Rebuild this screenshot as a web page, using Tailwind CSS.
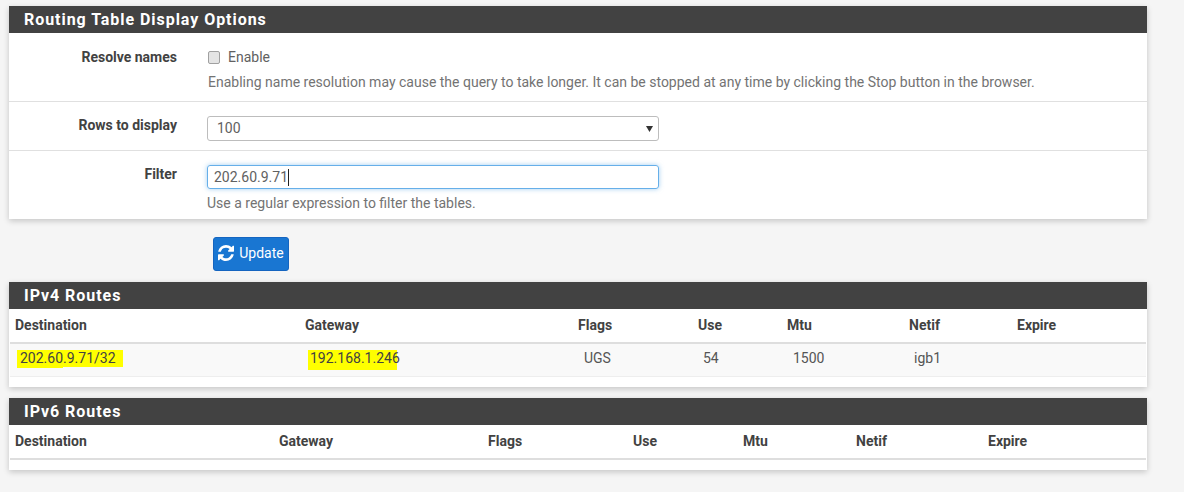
<!DOCTYPE html>
<html lang="en">
  <head>
    <meta charset="UTF-8" />
    <title>Diagnostics: Routes</title>
    <script src="https://cdn.jsdelivr.net/npm/@tailwindcss/browser@4"></script>
  </head>
  <body class="bg-[#f5f5f5] text-[#424242] text-[14px] font-['Roboto',sans-serif] h-[492px] overflow-hidden">
    <div class="w-[1138px] ml-[9px] pt-[6px]">
      <!-- Options panel -->
      <section class="bg-white shadow-[0_2px_6px_rgba(0,0,0,0.2)]">
        <h2 class="h-[27px] bg-[#424242] text-white text-[16px] leading-[27px] font-bold tracking-[0.95px] pl-[15px]">Routing Table Display Options</h2>
        <div class="h-[69px] border-b border-[#e0e0e0] flex">
          <div class="w-[168px] text-right font-bold pt-[14px] leading-[20px]">Resolve names</div>
          <div class="ml-[30px] pt-[14px]">
            <label class="flex items-center h-[20px] text-[#616161]">
              <input type="checkbox" class="appearance-none w-[12px] h-[13px] bg-[#e4e4e4] border border-[#a0a0a0] rounded-[2px] ml-[1px] mr-[7px]" />
              <span class="ml-[1px]">Enable</span>
            </label>
            <p class="mt-[5px] ml-px text-[14px] leading-[20px] text-[#737373]">Enabling name resolution may cause the query to take longer. It can be stopped at any time by clicking the Stop button in the browser.</p>
          </div>
        </div>
        <div class="h-[49px] border-b border-[#e0e0e0] flex">
          <div class="w-[168px] text-right font-bold pt-[13px] leading-[20px]">Rows to display</div>
          <div class="ml-[30px] pt-[14px] relative">
            <select class="appearance-none w-[452px] h-[25px] border border-[#bdbdbd] rounded-[3px] pl-[9px] text-[14px] text-[#616161] bg-white">
              <option>100</option>
            </select>
            <svg class="absolute left-[439px] top-[24px]" width="7" height="6" viewBox="0 0 7 6"><path d="M0 0h7L3.5 6z" fill="#333" /></svg>
          </div>
        </div>
        <div class="h-[68px] flex">
          <div class="w-[168px] text-right font-bold pt-[13px] leading-[20px]">Filter</div>
          <div class="ml-[30px] pt-[14px]">
            <div class="relative">
              <input type="text" value="202.60.9.71" class="block w-[452px] h-[24px] border border-[#66afe9] rounded-[3px] pl-[6px] text-[14px] text-[#616161] shadow-[0_0_5px_rgba(102,175,233,0.6)] outline-none" />
              <span class="absolute left-[81px] top-[4px] w-px h-[17px] bg-[#222]"></span>
            </div>
            <p class="mt-[4px] text-[14px] leading-[20px] text-[#737373]">Use a regular expression to filter the tables.</p>
          </div>
        </div>
      </section>

      <button class="mt-[18px] ml-[204px] w-[76px] h-[34px] pb-[2px] bg-[#1976d2] rounded-[3px] border border-[#1565c0] text-white flex items-center justify-center gap-[5px]">
        <svg width="16" height="16" viewBox="0 0 1536 1536" fill="currentColor"><path d="M1511 928q0 5-1 7-64 268-268 434.5t-478 166.5q-146 0-282.5-55t-243.5-157l-129 129q-19 19-45 19t-45-19-19-45v-448q0-26 19-45t45-19h448q26 0 45 19t19 45-19 45l-137 137q71 66 161 102t187 36q134 0 250-65t186-179q11-17 53-117 8-23 30-23h192q13 0 22.5 9.5t9.5 22.5zm25-800v448q0 26-19 45t-45 19h-448q-26 0-45-19t-19-45 19-45l138-138q-148-137-349-137-134 0-250 65t-186 179q-11 17-53 117-8 23-30 23h-199q-13 0-22.5-9.5t-9.5-22.5v-7q65-268 270-434.5t480-166.5q146 0 284 55.5t245 156.5l130-129q19-19 45-19t45 19 19 45z" /></svg>
        Update
      </button>

      <!-- IPv4 -->
      <section class="mt-[11px] h-[105px] bg-white shadow-[0_2px_6px_rgba(0,0,0,0.2)]">
        <h2 class="h-[27px] bg-[#424242] text-white text-[16px] leading-[27px] font-bold tracking-[0.95px] pl-[15px]">IPv4 Routes</h2>
        <table class="table-fixed w-[1136px] ml-px border-collapse">
          <colgroup>
            <col class="w-[290px]" /><col class="w-[273px]" /><col class="w-[120px]" /><col class="w-[89px]" /><col class="w-[122px]" /><col class="w-[108px]" /><col />
          </colgroup>
          <thead>
            <tr class="h-[34px] border-b-[2px] border-[#dedede] text-left">
              <th class="pl-[5px] pb-[1px]">Destination</th><th class="pl-[5px] pb-[1px]">Gateway</th><th class="pl-[5px] pb-[1px]">Flags</th><th class="pl-[5px] pb-[1px]">Use</th><th class="pl-[5px] pb-[1px]">Mtu</th><th class="pl-[5px] pb-[1px]">Netif</th><th class="pl-[5px] pb-[1px]">Expire</th>
            </tr>
          </thead>
          <tbody class="text-[#555555]">
            <tr class="h-[33px] bg-[#f9f9f9] border-b border-[#eeeeee]">
              <td class="pl-[10px] pb-[3px] relative text-[#424242]">
                <span class="absolute left-[7px] top-[6px] w-[106px] h-[17px] bg-[#ffff00]"></span>
                <span class="absolute left-[7px] top-[21px] w-[46px] h-[3px] bg-[#ffff00]"></span>
                <span class="relative">202.60.9.71/32</span>
              </td>
              <td class="pl-[5px] pb-[3px] relative text-[#424242]">
                <span class="absolute left-[8px] top-[6px] w-[89px] h-[20px] bg-[#ffff00]"></span>
                <span class="relative ml-[5px]">192.168.1.246</span>
              </td>
              <td class="pl-[11px] pb-[3px]">UGS</td><td class="pl-[10px] pb-[3px]">54</td><td class="pl-[11px] pb-[3px]">1500</td><td class="pl-[10px] pb-[3px]">igb1</td><td></td>
            </tr>
          </tbody>
        </table>
      </section>

      <!-- IPv6 -->
      <section class="mt-[11px] h-[72px] bg-white shadow-[0_2px_6px_rgba(0,0,0,0.2)]">
        <h2 class="h-[27px] bg-[#424242] text-white text-[16px] leading-[27px] font-bold tracking-[0.95px] pl-[15px]">IPv6 Routes</h2>
        <table class="table-fixed w-[1136px] ml-px border-collapse">
          <colgroup>
            <col class="w-[264px]" /><col class="w-[209px]" /><col class="w-[145px]" /><col class="w-[110px]" /><col class="w-[113px]" /><col class="w-[132px]" /><col />
          </colgroup>
          <thead>
            <tr class="h-[34px] border-b-[2px] border-[#dedede] text-left">
              <th class="pl-[5px] pb-[1px]">Destination</th><th class="pl-[5px] pb-[1px]">Gateway</th><th class="pl-[5px] pb-[1px]">Flags</th><th class="pl-[5px] pb-[1px]">Use</th><th class="pl-[5px] pb-[1px]">Mtu</th><th class="pl-[5px] pb-[1px]">Netif</th><th class="pl-[5px] pb-[1px]">Expire</th>
            </tr>
          </thead>
        </table>
      </section>
    </div>
  </body>
</html>
